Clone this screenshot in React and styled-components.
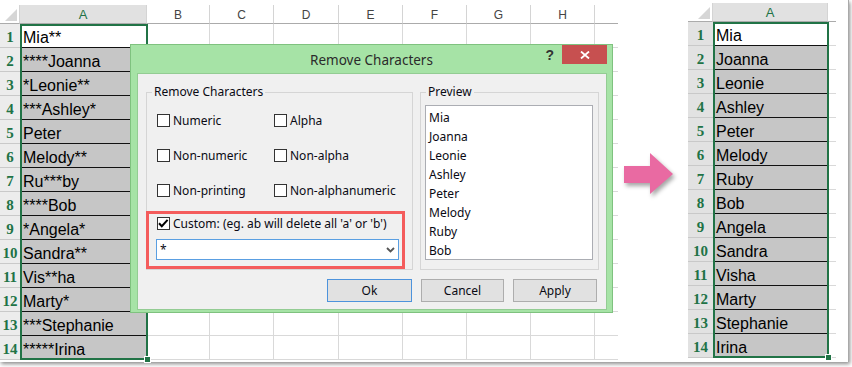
import React from "react";
import styled, { createGlobalStyle } from "styled-components";

const Global = createGlobalStyle`
  html, body { margin: 0; padding: 0; background: #fff; }
  body { width: 852px; height: 367px; overflow: hidden; font-family: "Liberation Sans", Arial, sans-serif; }
  * { box-sizing: border-box; }
`;

const Frame = styled.div`
  position: relative;
  width: 849px;
  height: 362px;
  display: flex;
  align-items: flex-start;
  background: #fff;
  border-right: 1px solid #a9a9a9;
  box-shadow: 1px 2px 4px rgba(0, 0, 0, 0.45);
`;

/* ---------- Spreadsheet ---------- */
const SheetGrid = styled.div`
  position: relative;
  flex: none;
  display: grid;
  grid-template-columns: ${(p) => p.$cols};
  grid-template-rows: 19px;
  grid-auto-rows: 24px;
  padding-top: ${(p) => p.$top}px;
`;

const Corner = styled.div`
  position: relative;
  background: #fff;
  border-bottom: 1px solid #ababab;
  border-right: 1px solid #d4d4d4;
  &::after {
    content: "";
    position: absolute;
    right: 2px;
    bottom: 2px;
    width: 0;
    height: 0;
    border-left: 12px solid transparent;
    border-bottom: 12px solid #d6d6d6;
  }
`;

const ColHead = styled.div`
  display: flex;
  align-items: center;
  justify-content: center;
  background: ${(p) => (p.$selected ? "#e1e1e1" : "#fff")};
  color: ${(p) => (p.$selected ? "#217346" : "#444")};
  font-size: ${(p) => (p.$selected ? "13px" : "12px")};
  border-bottom: 1px solid #ababab;
  border-right: ${(p) => (p.$last ? "none" : "1px solid #d4d4d4")};
  padding-top: 1px;
`;

const RowHead = styled.div`
  display: flex;
  align-items: flex-end;
  justify-content: center;
  padding-bottom: 2px;
  background: ${(p) => p.$bg};
  color: #217346;
  font-family: "Liberation Serif", "Times New Roman", serif;
  font-weight: bold;
  font-size: 15px;
  line-height: 15px;
  border-bottom: 1px solid #c9c9c9;
`;

const CellA = styled.div`
  display: flex;
  align-items: flex-end;
  padding: 0 0 0 3px;
  background: ${(p) => (p.$first ? "#fff" : "#c6c6c6")};
  border-bottom: 1px solid #111;
  color: #000;
  font-size: 16px;
  line-height: 18px;
  white-space: nowrap;
  overflow: hidden;
`;

const Cell = styled.div`
  border-bottom: 1px solid #d9d9d9;
  border-right: ${(p) => (p.$last ? "none" : "1px solid #d9d9d9")};
`;

const Selection = styled.div`
  position: absolute;
  left: ${(p) => p.$left}px;
  top: ${(p) => p.$top}px;
  width: ${(p) => p.$width}px;
  height: ${(p) => p.$height}px;
  border: 2px solid #217346;
  pointer-events: none;
`;

const FillHandle = styled.div`
  position: absolute;
  right: -5px;
  bottom: -5px;
  width: 7px;
  height: 7px;
  background: #217346;
  border: 1px solid #fff;
`;

function Sheet({ cols, letters, top, values, rowHeadBg }) {
  return (
    <SheetGrid $cols={cols.map((c) => c + "px").join(" ")} $top={top}>
      <Corner />
      {letters.map((l, i) => (
        <ColHead key={i} $selected={i === 0} $last={i === letters.length - 1}>
          {l}
        </ColHead>
      ))}
      {values.map((v, r) => (
        <React.Fragment key={r}>
          <RowHead $bg={rowHeadBg}>{r + 1}</RowHead>
          <CellA $first={r === 0}>{v}</CellA>
          {letters.slice(1).map((_, i) => (
            <Cell key={i} $last={i === letters.length - 2} />
          ))}
        </React.Fragment>
      ))}
      <Selection
        $left={cols[0]}
        $top={top + 19}
        $width={cols[1] + 1}
        $height={values.length * 24}
      >
        <FillHandle />
      </Selection>
    </SheetGrid>
  );
}

/* ---------- Arrow ---------- */
const ArrowCol = styled.div`
  flex: none;
  width: 70px;
  padding: 153px 0 0 6px;
`;

const ArrowSvg = styled.svg`
  display: block;
  filter: drop-shadow(2px 3px 2px rgba(0, 0, 0, 0.35));
`;

/* ---------- Dialog ---------- */
const Dialog = styled.div`
  position: absolute;
  left: 130px;
  top: 44px;
  width: 483px;
  height: 269px;
  display: flex;
  flex-direction: column;
  background: #a6e3a6;
  border: 1px solid #7fc27f;
  font-family: "Noto Sans", "Open Sans", sans-serif;
  font-size: 12px;
  color: #0a0a14;
`;

const TitleBar = styled.div`
  flex: none;
  height: 28px;
  display: grid;
  grid-template-columns: 1fr auto 1fr;
  align-items: center;
`;

const Title = styled.div`
  grid-column: 2;
  font-size: 13.5px;
  color: #2b2b2b;
  padding-top: 2px;
`;

const TitleControls = styled.div`
  grid-column: 3;
  justify-self: end;
  align-self: start;
  display: flex;
  align-items: center;
  gap: 8px;
  margin-right: 5px;
`;

const Help = styled.span`
  font-family: "Liberation Sans", Arial, sans-serif;
  font-weight: bold;
  font-size: 14px;
  color: #333;
  margin-top: 1px;
`;

const CloseBtn = styled.div`
  width: 45px;
  height: 19px;
  background: #c75050;
  display: flex;
  align-items: center;
  justify-content: center;
`;

const Panel = styled.div`
  flex: 1;
  margin: 0 5px 5px 6px;
  background: #f0f0f0;
  border: 1px solid #93cc93;
  display: flex;
  flex-direction: column;
  padding: 10px 7px 7px 8px;
`;

const GroupsRow = styled.div`
  flex: 1;
  display: flex;
  gap: 7px;
  min-height: 0;
`;

const Group = styled.fieldset`
  margin: 0;
  padding: 0;
  width: ${(p) => p.$w}px;
  min-width: 0;
  border: 1px solid #d5d5d5;
  display: flex;
  flex-direction: column;
`;

const Legend = styled.legend`
  margin-left: 5px;
  padding: 0 2px;
  line-height: 16px;
`;

const OptionsGrid = styled.div`
  display: grid;
  grid-template-columns: 117px auto;
  grid-auto-rows: 20px;
  row-gap: 15px;
  padding: 10px 0 0 10px;
`;

const Option = styled.label`
  display: flex;
  align-items: center;
  gap: 3px;
  white-space: nowrap;
`;

const Box = styled.span`
  flex: none;
  width: 13px;
  height: 13px;
  border: 1px solid #333;
  background: #fff;
  display: inline-flex;
  align-items: center;
  justify-content: center;
`;

const CustomBox = styled.div`
  width: 259px;
  height: 58px;
  margin: 11px 0 0 -1px;
  border: 3px solid #f45c5c;
  padding: 0 0 0 7px;
  display: flex;
  flex-direction: column;
`;

const CustomRow = styled(Option)`
  height: 18px;
  margin-left: 1px;
`;

const Combo = styled.div`
  width: 243px;
  height: 21px;
  margin-top: 7px;
  background: #fff;
  border: 1px solid #5a9fe2;
  display: flex;
  align-items: center;
  justify-content: space-between;
  padding: 0 3px 0 3px;
  font-size: 12px;
`;

const ListBox = styled.div`
  width: 168px;
  height: 155px;
  margin: 5px 0 0 4px;
  background: #fff;
  border: 1px solid #abadb3;
  padding: 2px 3px;
`;

const ListItem = styled.div`
  height: 19px;
  line-height: 19px;
  white-space: nowrap;
`;

const ButtonRow = styled.div`
  flex: none;
  display: flex;
  justify-content: flex-end;
  gap: 9px;
  margin: 9px 2px 0 0;
  height: 23px;
`;

const Button = styled.div`
  width: ${(p) => p.$w}px;
  height: 23px;
  display: flex;
  align-items: center;
  justify-content: center;
  background: #e1e1e1;
  border: 1px solid ${(p) => (p.$default ? "#4d93dc" : "#adadad")};
`;

function Checkbox({ checked }) {
  return (
    <Box>
      {checked && (
        <svg width="11" height="11" viewBox="0 0 11 11">
          <path d="M1 5.2 L3.8 8.2 L9.6 1.8" fill="none" stroke="#000" strokeWidth="2" />
        </svg>
      )}
    </Box>
  );
}

const leftValues = [
  "Mia**", "****Joanna", "*Leonie**", "***Ashley*", "Peter", "Melody**", "Ru***by",
  "****Bob", "*Angela*", "Sandra**", "Vis**ha", "Marty*", "***Stephanie", "*****Irina",
];
const rightValues = [
  "Mia", "Joanna", "Leonie", "Ashley", "Peter", "Melody", "Ruby",
  "Bob", "Angela", "Sandra", "Visha", "Marty", "Stephanie", "Irina",
];
const preview = ["Mia", "Joanna", "Leonie", "Ashley", "Peter", "Melody", "Ruby", "Bob"];

export default function App() {
  return (
    <>
      <Global />
      <Frame>
        <Sheet
          cols={[20, 127, 63, 64, 65, 64, 64, 64, 64, 23]}
          letters={["A", "B", "C", "D", "E", "F", "G", "H", ""]}
          top={5}
          values={leftValues}
          rowHeadBg="#ececec"
        />
        <ArrowCol>
          <ArrowSvg width="52" height="44" viewBox="0 0 52 44">
            <polygon points="0,13 26,13 26,0 49,21 26,41 26,30 0,30" fill="#e96aa2" />
          </ArrowSvg>
        </ArrowCol>
        <Sheet
          cols={[25, 115, 8]}
          letters={["A", ""]}
          top={3}
          values={rightValues}
          rowHeadBg="#e2e2e2"
        />

        <Dialog>
          <TitleBar>
            <Title>Remove Characters</Title>
            <TitleControls>
              <Help>?</Help>
              <CloseBtn>
                <svg width="10" height="8" viewBox="0 0 10 8">
                  <path d="M1 0.5 L9 7.5 M9 0.5 L1 7.5" stroke="#fff" strokeWidth="1.8" />
                </svg>
              </CloseBtn>
            </TitleControls>
          </TitleBar>
          <Panel>
            <GroupsRow>
              <Group $w={267}>
                <Legend>Remove Characters</Legend>
                <OptionsGrid>
                  <Option><Checkbox />Numeric</Option>
                  <Option><Checkbox />Alpha</Option>
                  <Option><Checkbox />Non-numeric</Option>
                  <Option><Checkbox />Non-alpha</Option>
                  <Option><Checkbox />Non-printing</Option>
                  <Option><Checkbox />Non-alphanumeric</Option>
                </OptionsGrid>
                <CustomBox>
                  <CustomRow><Checkbox checked />Custom: (eg. ab will delete all 'a' or 'b')</CustomRow>
                  <Combo>
                    <span>*</span>
                    <svg width="9" height="6" viewBox="0 0 9 6">
                      <path d="M1 1 L4.5 4.5 L8 1" fill="none" stroke="#555" strokeWidth="1.8" />
                    </svg>
                  </Combo>
                </CustomBox>
              </Group>
              <Group $w={179}>
                <Legend>Preview</Legend>
                <ListBox>
                  {preview.map((p) => (
                    <ListItem key={p}>{p}</ListItem>
                  ))}
                </ListBox>
              </Group>
            </GroupsRow>
            <ButtonRow>
              <Button $w={85} $default>Ok</Button>
              <Button $w={83}>Cancel</Button>
              <Button $w={84}>Apply</Button>
            </ButtonRow>
          </Panel>
        </Dialog>
      </Frame>
    </>
  );
}
